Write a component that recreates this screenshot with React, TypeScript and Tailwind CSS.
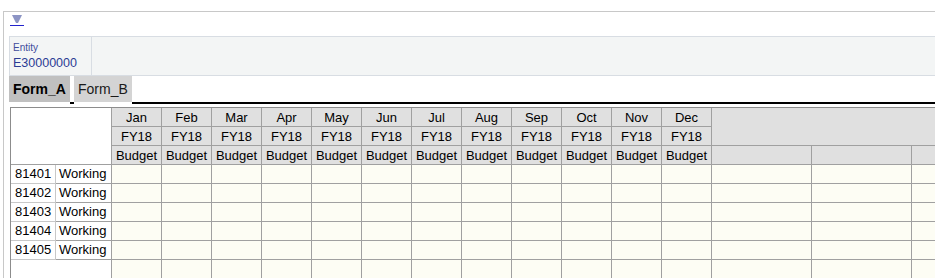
const months = ["Jan", "Feb", "Mar", "Apr", "May", "Jun", "Jul", "Aug", "Sep", "Oct", "Nov", "Dec"];
const accounts = ["81401", "81402", "81403", "81404", "81405"];

function HeaderCell({ children }: { children: React.ReactNode }) {
  return (
    <div className="flex items-center justify-center border-b border-r border-[#a0a0a0] bg-[#e0e0e0] text-[13px] leading-none text-black">
      {children}
    </div>
  );
}

function DataCell() {
  return <div className="border-b border-r border-[#a0a0a0] bg-[#fdfdf4]" />;
}

export default function App() {
  return (
    <main className="h-[278px] w-[935px] overflow-hidden bg-white font-['Liberation_Sans',Arial,sans-serif]">
      <div className="ml-[3px] mt-[11px] h-[267px] border-l border-t border-[#c8c8c8] pl-[5px]">
        <div className="flex h-[24px] items-start pl-[1px] pt-[3px]">
          <a className="block border-b border-[#2222cc] px-[2px] pb-[2px]">
            <svg className="block" width="10" height="8" viewBox="0 0 10 8">
              <polygon points="0,0 10,0 6,8 4,8" fill="#8c94c4" />
            </svg>
          </a>
        </div>

        <div className="flex h-[40px] border-b border-l border-t border-[#d8dde3] bg-[#f3f5f5]">
          <div className="w-[82px] border-r border-[#d8dde3] pl-[3px] pt-[5px]">
            <div className="text-[10px] leading-[12px] text-[#3f4c9c]">Entity</div>
            <div className="mt-[2px] text-[12.5px] leading-[15px] text-[#2c3c94]">E30000000</div>
          </div>
        </div>

        <div className="flex h-[28px] items-start">
          <div className="flex h-[26px] w-[61px] items-center pl-[4px] text-[14px] font-bold text-black bg-[#c0c0c0]">
            Form_A
          </div>
          <div className="h-[28px] w-[4px] border-b-2 border-black" />
          <div className="flex h-[26px] w-[58px] items-center pl-[4px] text-[14px] text-[#1a1a1a] bg-[#d4d4d4]">
            Form_B
          </div>
          <div className="h-[28px] flex-1 border-b-2 border-black" />
        </div>

        <div className="ml-[1px] mt-[3px] grid grid-cols-[45px_56px_repeat(12,50px)_100px_100px_200px] grid-rows-[repeat(9,19px)] border-l border-t border-[#8c8c8c]">
          <div className="col-span-2 row-span-3 border-b border-r border-[#a0a0a0] bg-white" />
          {months.map((m) => (
            <HeaderCell key={m}>{m}</HeaderCell>
          ))}
          <div className="col-span-3 row-span-2 border-b border-[#a0a0a0] bg-[#e0e0e0]" />
          {months.map((m) => (
            <HeaderCell key={m + "fy"}>FY18</HeaderCell>
          ))}
          {months.map((m) => (
            <HeaderCell key={m + "sc"}>Budget</HeaderCell>
          ))}
          <div className="border-b border-r border-[#a0a0a0] bg-[#e0e0e0]" />
          <div className="border-b border-r border-[#a0a0a0] bg-[#e0e0e0]" />
          <div className="border-b border-[#a0a0a0] bg-[#e0e0e0]" />

          {accounts.map((acc) => (
            <div key={acc} className="contents">
              <div className="flex items-center border-b border-r border-[#c8c8c8] bg-white pl-[4px] text-[13px] text-black">
                {acc}
              </div>
              <div className="flex items-center border-b border-r border-[#a0a0a0] bg-white pl-[3px] text-[13px] text-black">
                Working
              </div>
              {months.map((m) => (
                <DataCell key={m} />
              ))}
              <DataCell />
              <DataCell />
              <div className="border-b border-[#a0a0a0] bg-[#fdfdf4]" />
            </div>
          ))}

          <div className="col-span-2 border-r border-[#a0a0a0] bg-white" />
          {months.map((m) => (
            <div key={m + "end"} className="border-r border-[#a0a0a0] bg-[#fdfdf4]" />
          ))}
          <div className="border-r border-[#a0a0a0] bg-[#fdfdf4]" />
          <div className="border-r border-[#a0a0a0] bg-[#fdfdf4]" />
          <div className="bg-[#fdfdf4]" />
        </div>
      </div>
    </main>
  );
}
